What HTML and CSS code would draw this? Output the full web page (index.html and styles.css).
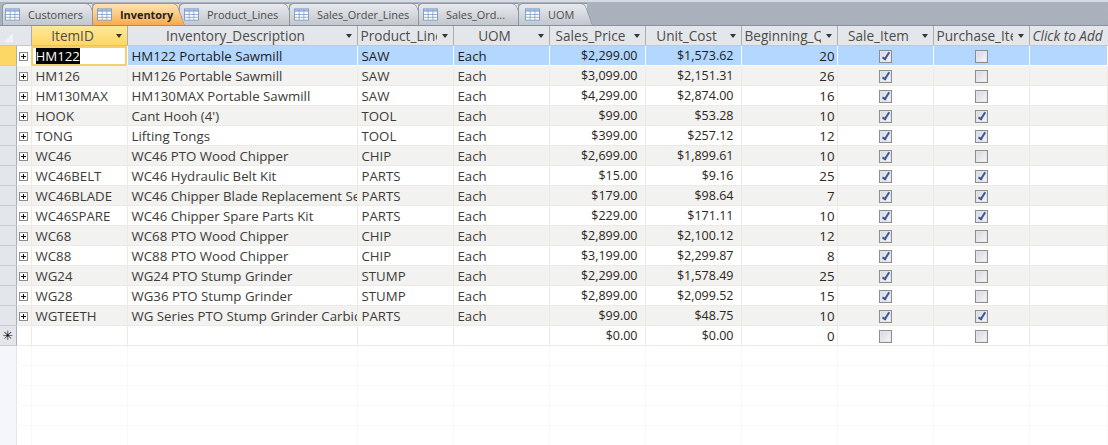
FILE: index.html
```html
<!DOCTYPE html>
<html lang="en">
<head>
    <meta charset="UTF-8">
    <title>Inventory</title>
    <link rel="stylesheet" href="styles.css">
</head>
<body>
    <svg class="defs" width="0" height="0">
        <symbol id="grid" viewBox="0 0 16 13">
            <rect x="0.5" y="0.5" width="15" height="12" fill="#fff" stroke="#7f9ac4"/>
            <rect x="1" y="1" width="14" height="2.5" fill="#8fb0dc"/>
            <path d="M1 6.5H15M1 9.500H15M5.500 1V12M10.500 1V12" stroke="#8ea8cf" fill="none"/>
        </symbol>
    </svg>
    <div class="tabs">
        <div class="tab w-customers"><svg class="tab-icon"><use href="#grid"/></svg>Customers</div>
        <div class="tab active w-inventory"><svg class="tab-icon"><use href="#grid"/></svg>Inventory</div>
        <div class="tab w-lines"><svg class="tab-icon"><use href="#grid"/></svg>Product_Lines</div>
        <div class="tab w-sol"><svg class="tab-icon"><use href="#grid"/></svg>Sales_Order_Lines</div>
        <div class="tab w-so"><svg class="tab-icon"><use href="#grid"/></svg>Sales_Ord...</div>
        <div class="tab w-uom"><svg class="tab-icon"><use href="#grid"/></svg>UOM</div>
    </div>
    <table class="sheet">
        <colgroup>
            <col class="c-sel"><col class="c-exp"><col class="c-id"><col class="c-desc"><col class="c-std"><col class="c-std"><col class="c-std"><col class="c-std"><col class="c-std"><col class="c-std"><col class="c-std"><col>
        </colgroup>
        <thead>
            <tr>
                <th class="corner" colspan="2"><span class="corner-mark"></span></th>
                <th class="current"><div class="head"><span class="head-text">ItemID</span><i class="arrow"></i></div></th>
                <th><div class="head"><span class="head-text">Inventory_Description</span><i class="arrow"></i></div></th>
                <th><div class="head"><span class="head-text">Product_Line</span><i class="arrow"></i></div></th>
                <th><div class="head"><span class="head-text">UOM</span><i class="arrow"></i></div></th>
                <th><div class="head"><span class="head-text">Sales_Price</span><i class="arrow"></i></div></th>
                <th><div class="head"><span class="head-text">Unit_Cost</span><i class="arrow"></i></div></th>
                <th><div class="head"><span class="head-text">Beginning_Q</span><i class="arrow"></i></div></th>
                <th><div class="head"><span class="head-text">Sale_Item</span><i class="arrow"></i></div></th>
                <th><div class="head"><span class="head-text">Purchase_Item</span><i class="arrow"></i></div></th>
                <th class="add">Click to Add</th>
            </tr>
        </thead>
        <tbody>
            <tr class="selected">
                <td class="sel sel-on"></td><td class="exp"><span class="plus"></span></td><td class="focus"><span class="hilite">HM122</span></td><td>HM122 Portable Sawmill</td><td>SAW</td><td>Each</td><td class="money">$2,299.00</td><td class="money">$1,573.62</td><td class="num">20</td><td class="chk"><span class="box on"></span></td><td class="chk"><span class="box"></span></td><td></td>
            </tr>
            <tr class="alt">
                <td class="sel"></td><td class="exp"><span class="plus"></span></td><td>HM126</td><td>HM126 Portable Sawmill</td><td>SAW</td><td>Each</td><td class="money">$3,099.00</td><td class="money">$2,151.31</td><td class="num">26</td><td class="chk"><span class="box on"></span></td><td class="chk"><span class="box"></span></td><td></td>
            </tr>
            <tr>
                <td class="sel"></td><td class="exp"><span class="plus"></span></td><td>HM130MAX</td><td>HM130MAX Portable Sawmill</td><td>SAW</td><td>Each</td><td class="money">$4,299.00</td><td class="money">$2,874.00</td><td class="num">16</td><td class="chk"><span class="box on"></span></td><td class="chk"><span class="box"></span></td><td></td>
            </tr>
            <tr class="alt">
                <td class="sel"></td><td class="exp"><span class="plus"></span></td><td>HOOK</td><td>Cant Hooh (4')</td><td>TOOL</td><td>Each</td><td class="money">$99.00</td><td class="money">$53.28</td><td class="num">10</td><td class="chk"><span class="box on"></span></td><td class="chk"><span class="box on"></span></td><td></td>
            </tr>
            <tr>
                <td class="sel"></td><td class="exp"><span class="plus"></span></td><td>TONG</td><td>Lifting Tongs</td><td>TOOL</td><td>Each</td><td class="money">$399.00</td><td class="money">$257.12</td><td class="num">12</td><td class="chk"><span class="box on"></span></td><td class="chk"><span class="box on"></span></td><td></td>
            </tr>
            <tr class="alt">
                <td class="sel"></td><td class="exp"><span class="plus"></span></td><td>WC46</td><td>WC46 PTO Wood Chipper</td><td>CHIP</td><td>Each</td><td class="money">$2,699.00</td><td class="money">$1,899.61</td><td class="num">10</td><td class="chk"><span class="box on"></span></td><td class="chk"><span class="box"></span></td><td></td>
            </tr>
            <tr>
                <td class="sel"></td><td class="exp"><span class="plus"></span></td><td>WC46BELT</td><td>WC46 Hydraulic Belt Kit</td><td>PARTS</td><td>Each</td><td class="money">$15.00</td><td class="money">$9.16</td><td class="num">25</td><td class="chk"><span class="box on"></span></td><td class="chk"><span class="box on"></span></td><td></td>
            </tr>
            <tr class="alt">
                <td class="sel"></td><td class="exp"><span class="plus"></span></td><td>WC46BLADE</td><td>WC46 Chipper Blade Replacement Set</td><td>PARTS</td><td>Each</td><td class="money">$179.00</td><td class="money">$98.64</td><td class="num">7</td><td class="chk"><span class="box on"></span></td><td class="chk"><span class="box on"></span></td><td></td>
            </tr>
            <tr>
                <td class="sel"></td><td class="exp"><span class="plus"></span></td><td>WC46SPARE</td><td>WC46 Chipper Spare Parts Kit</td><td>PARTS</td><td>Each</td><td class="money">$229.00</td><td class="money">$171.11</td><td class="num">10</td><td class="chk"><span class="box on"></span></td><td class="chk"><span class="box on"></span></td><td></td>
            </tr>
            <tr class="alt">
                <td class="sel"></td><td class="exp"><span class="plus"></span></td><td>WC68</td><td>WC68 PTO Wood Chipper</td><td>CHIP</td><td>Each</td><td class="money">$2,899.00</td><td class="money">$2,100.12</td><td class="num">12</td><td class="chk"><span class="box on"></span></td><td class="chk"><span class="box"></span></td><td></td>
            </tr>
            <tr>
                <td class="sel"></td><td class="exp"><span class="plus"></span></td><td>WC88</td><td>WC88 PTO Wood Chipper</td><td>CHIP</td><td>Each</td><td class="money">$3,199.00</td><td class="money">$2,299.87</td><td class="num">8</td><td class="chk"><span class="box on"></span></td><td class="chk"><span class="box"></span></td><td></td>
            </tr>
            <tr class="alt">
                <td class="sel"></td><td class="exp"><span class="plus"></span></td><td>WG24</td><td>WG24 PTO Stump Grinder</td><td>STUMP</td><td>Each</td><td class="money">$2,299.00</td><td class="money">$1,578.49</td><td class="num">25</td><td class="chk"><span class="box on"></span></td><td class="chk"><span class="box"></span></td><td></td>
            </tr>
            <tr>
                <td class="sel"></td><td class="exp"><span class="plus"></span></td><td>WG28</td><td>WG36 PTO Stump Grinder</td><td>STUMP</td><td>Each</td><td class="money">$2,899.00</td><td class="money">$2,099.52</td><td class="num">15</td><td class="chk"><span class="box on"></span></td><td class="chk"><span class="box"></span></td><td></td>
            </tr>
            <tr class="alt">
                <td class="sel"></td><td class="exp"><span class="plus"></span></td><td>WGTEETH</td><td>WG Series PTO Stump Grinder Carbide</td><td>PARTS</td><td>Each</td><td class="money">$99.00</td><td class="money">$48.75</td><td class="num">10</td><td class="chk"><span class="box on"></span></td><td class="chk"><span class="box on"></span></td><td></td>
            </tr>
            <tr>
                <td class="sel star">&#10035;</td><td class="exp"></td><td></td><td></td><td></td><td></td><td class="money">$0.00</td><td class="money">$0.00</td><td class="num">0</td><td class="chk"><span class="box"></span></td><td class="chk"><span class="box"></span></td><td></td>
            </tr>
            <tr class="empty"><td class="sel"></td><td></td><td></td><td></td><td></td><td></td><td></td><td></td><td></td><td></td><td></td><td></td></tr>
            <tr class="empty"><td class="sel"></td><td></td><td></td><td></td><td></td><td></td><td></td><td></td><td></td><td></td><td></td><td></td></tr>
            <tr class="empty"><td class="sel"></td><td></td><td></td><td></td><td></td><td></td><td></td><td></td><td></td><td></td><td></td><td></td></tr>
            <tr class="empty"><td class="sel"></td><td></td><td></td><td></td><td></td><td></td><td></td><td></td><td></td><td></td><td></td><td></td></tr>
            <tr class="empty"><td class="sel"></td><td></td><td></td><td></td><td></td><td></td><td></td><td></td><td></td><td></td><td></td><td></td></tr>
        </tbody>
    </table>
</body>
</html>
```

FILE: styles.css
```css
html, body {
    margin: 0;
    padding: 0;
    height: 445px;
    overflow: hidden;
}
body {
    width: 1108px;
    background: #fff;
    font-family: "Open Sans", "Noto Sans", sans-serif;
    font-size: 13.250px;
    color: #403a36;
}
.defs {
    display: block;
    height: 0;
}
.tabs {
    display: flex;
    height: 22px;
    padding-left: 2px;
    padding-top: 3px;
    background: linear-gradient(#d6dae2 0, #d6dae2 2px, #aab2be 2px, #a8b0bc 100%);
    border-bottom: 1px solid #8b929c;
}
.tab {
    position: relative;
    z-index: 0;
    display: flex;
    align-items: center;
    height: 22px;
    padding-left: 4px;
    box-sizing: border-box;
    background: linear-gradient(#e8eaee, #c2c6ce);
    border: 1px solid #8f96a0;
    border-right: none;
    border-bottom: none;
    border-radius: 5px 0 0 0;
    color: #4c4c4c;
    font-size: 10.900px;
}
.tab::after {
    content: "";
    position: absolute;
    z-index: -1;
    top: -1px;
    bottom: 0;
    right: -6px;
    width: 16px;
    background: linear-gradient(#e8eaee, #c2c6ce);
    border-top: 1px solid #8f96a0;
    border-right: 1px solid #8f96a0;
    border-radius: 0 5px 0 0;
    transform: skewX(20deg);
    transform-origin: bottom;
}
.tab.active {
    z-index: 2;
    background: linear-gradient(#fde2b6, #fbc77a 55%, #f9a94e);
    color: #222;
    font-weight: 700;
}
.tab.active::after {
    background: linear-gradient(#fde2b6, #fbc77a 55%, #f9a94e);
}
.tab-icon {
    width: 15px;
    height: 13px;
    margin-right: 8px;
    flex: none;
}
.w-customers { width: 90px; padding-left: 2px; }
.w-inventory { width: 87px; }
.w-lines { width: 110px; }
.w-sol { width: 129px; }
.w-so { width: 100px; }
.w-uom { width: 69px; padding-left: 6px; }
.sheet {
    table-layout: fixed;
    border-collapse: collapse;
    width: 1108px;
}
.c-sel { width: 16px; }
.c-exp { width: 15px; }
.c-id { width: 96px; }
.c-desc { width: 230px; }
.c-std { width: 96px; }
th {
    height: 19px;
    padding: 0;
    background: #e3e6ea;
    border-right: 1px solid #a8aeb6;
    border-bottom: 1px solid #c4c8ce;
    font-weight: 400;
    font-size: 13.600px;
    color: #4c4c4c;
}
th.current {
    background: linear-gradient(#fee89a, #fdd765);
    border-bottom-color: #eec25a;
}
th.corner {
    position: relative;
    background: #e3e6ea;
}
.corner-mark {
    position: absolute;
    left: 4px;
    bottom: 3px;
    width: 0;
    height: 0;
    border-left: 9px solid transparent;
    border-bottom: 9px solid #f2f3f5;
}
th.add {
    text-align: left;
    padding-left: 3px;
    font-style: italic;
    white-space: nowrap;
    border-right: none;
}
.head {
    display: flex;
    align-items: center;
    justify-content: center;
    padding: 0 16px 0 3px;
    position: relative;
    height: 19px;
}
.head-text {
    overflow: hidden;
    white-space: nowrap;
}
.arrow {
    position: absolute;
    right: 5px;
    top: 8px;
    width: 0;
    height: 0;
    border-left: 3px solid transparent;
    border-right: 3px solid transparent;
    border-top: 4px solid #333;
}
td {
    height: 18px;
    padding: 1px 3px 0 4px;
    box-sizing: content-box;
    border-right: 1px solid #eceae3;
    border-bottom: 1px solid #eceae3;
    overflow: hidden;
    white-space: nowrap;
    line-height: 18px;
}
.alt td {
    background: #f2f2f1;
}
.selected td {
    background: #b3d7ff;
    color: #1c1c1c;
    border-right-color: #fff;
    border-bottom-color: #fff;
}
.selected td.focus {
    background: #fff;
    outline: 2px solid #f5cf6c;
    outline-offset: -2px;
    color: #fff;
}
.hilite {
    background: #000;
    color: #fff;
    padding: 1px 0;
}
.sel,
.selected td.sel,
.alt td.sel {
    padding: 1px 0 0;
    background: #e3e6ea;
    border-right: 1px solid #a8aeb6;
    border-bottom: 1px solid #c8ccd2;
}
.selected td.sel-on {
    background: #fdd765;
}
.star {
    text-align: center;
    font-family: "DejaVu Sans", sans-serif;
    font-size: 13px;
    color: #111;
}
.exp,
.selected td.exp,
.alt td.exp {
    padding: 1px 0 0;
    text-align: center;
}
.selected td.exp {
    background: #fff;
}
.plus {
    display: block;
    width: 7px;
    height: 7px;
    margin: 0 auto;
    border: 1px solid #8c8c8c;
    background: linear-gradient(#111, #111) center / 5px 1px no-repeat, linear-gradient(#111, #111) center / 1px 5px no-repeat, #fff;
}
.num,
.money {
    text-align: right;
    color: #2e2620;
}
.num {
    padding-right: 2px;
}
.money {
    padding-right: 7px;
    font-size: 12.500px;
}
.chk {
    text-align: center;
}
.box {
    display: block;
    position: relative;
    width: 11px;
    height: 11px;
    margin: 0 auto;
    border: 1px solid #8d8d8d;
    background: linear-gradient(135deg, #d4d7de, #f8f8fa);
    box-shadow: inset 0 0 0 1px #e4e5ea;
}
.box.on::after {
    content: "";
    position: absolute;
    left: 4px;
    top: 0;
    width: 2px;
    height: 7px;
    border-right: 2px solid #3f5598;
    border-bottom: 2px solid #3f5598;
    transform: rotate(32deg);
}
.empty td {
    border-right-color: #f8f8f8;
    border-bottom-color: #f8f8f8;
}
.empty td.sel {
    background: #f4f6fc;
    border-right: 1px solid #e4e6ee;
    border-bottom-color: #f4f6fc;
}
```
